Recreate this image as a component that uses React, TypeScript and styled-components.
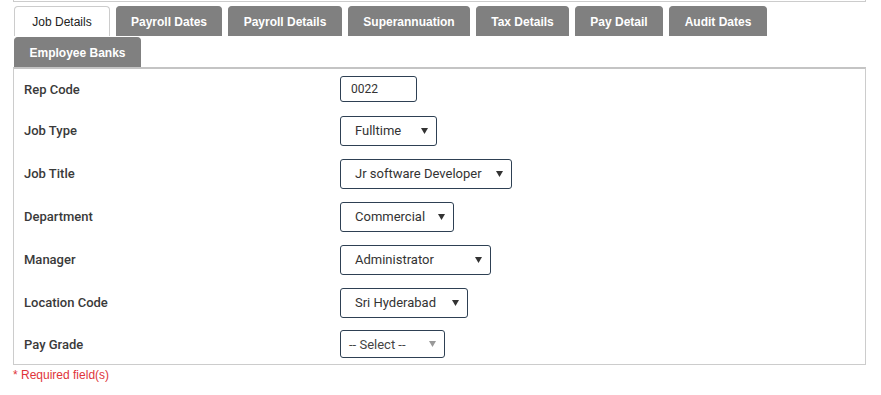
import React from 'react'
import styled, { createGlobalStyle } from 'styled-components'

const GlobalStyle = createGlobalStyle`
  html, body {
    margin: 0;
    padding: 0;
    background: #fff;
  }
  body {
    font-family: Roboto, "Liberation Sans", Arial, sans-serif;
    color: #333;
  }
`

const Page = styled.div`
  padding-left: 13px;
  width: 853px;
`

const TopEdge = styled.div`
  height: 1px;
  border: 1px solid #ccc;
  border-top: none;
`

const TabBar = styled.div`
  display: flex;
  flex-wrap: wrap;
  margin-top: 4px;
  padding-left: 1px;
  row-gap: 1px;
`

const Tab = styled.div<{ $active?: boolean; $w: number }>`
  width: ${p => p.$w}px;
  height: 30px;
  box-sizing: border-box;
  display: flex;
  align-items: center;
  justify-content: center;
  white-space: nowrap;
  margin-right: 6px;
  border-radius: 4px 4px 0 0;
  font-family: "Liberation Sans", Arial, sans-serif;
  font-size: 12px;
  font-weight: ${p => (p.$active ? 'normal' : 'bold')};
  color: ${p => (p.$active ? '#222' : '#fff')};
  background: ${p => (p.$active ? '#fff' : '#808080')};
  border: 1px solid ${p => (p.$active ? '#ccc' : '#808080')};
  border-bottom: none;
`

const Panel = styled.div`
  border: 1px solid #ccc;
  border-top: 2px solid #c4c4c4;
  height: 298px;
  box-sizing: border-box;
  display: flex;
  flex-direction: column;
`

const Row = styled.div<{ $h: number }>`
  display: flex;
  align-items: center;
  height: ${p => p.$h}px;
  flex: none;
`

const Label = styled.div`
  width: 316px;
  padding-left: 10px;
  font-size: 13px;
  font-weight: 500;
  color: #3a3a3a;
`

const TextInput = styled.div`
  width: 77px;
  height: 26px;
  box-sizing: border-box;
  border: 1px solid #2e4053;
  border-radius: 3px;
  display: flex;
  align-items: center;
  padding-left: 10px;
  font-size: 12px;
  color: #333;
`

const SelectBox = styled.div<{ $w: number; $h?: number; $muted?: boolean }>`
  width: ${p => p.$w}px;
  height: ${p => p.$h ?? 30}px;
  box-sizing: border-box;
  border: 1px solid #2e4053;
  border-radius: 3px;
  display: flex;
  align-items: center;
  justify-content: space-between;
  padding: 0 8px 0 ${p => (p.$muted ? 8 : 14)}px;
  font-size: 13px;
  color: ${p => (p.$muted ? '#444' : '#333')};
`

const Arrow = styled.svg`
  width: 7px;
  height: 6px;
  flex: none;
`

const Required = styled.div`
  margin-top: 3px;
  font-family: "Liberation Sans", Arial, sans-serif;
  font-size: 12px;
  color: #e0343a;
`

const tabs = [
  { name: 'Job Details', w: 96, active: true },
  { name: 'Payroll Dates', w: 106 },
  { name: 'Payroll Details', w: 114 },
  { name: 'Superannuation', w: 122 },
  { name: 'Tax Details', w: 93 },
  { name: 'Pay Detail', w: 88 },
  { name: 'Audit Dates', w: 98 },
  { name: 'Employee Banks', w: 127 }
]

const selects = [
  { label: 'Job Type', value: 'Fulltime', w: 97 },
  { label: 'Job Title', value: 'Jr software Developer', w: 172 },
  { label: 'Department', value: 'Commercial', w: 114 },
  { label: 'Manager', value: 'Administrator', w: 151 },
  { label: 'Location Code', value: 'Sri Hyderabad', w: 128 }
]

const Caret = ({ color = '#333' }: { color?: string }) => (
  <Arrow viewBox="0 0 7 6">
    <path d="M0 0 H7 L3.5 6 Z" fill={color} />
  </Arrow>
)

export default function App() {
  return (
    <Page>
      <GlobalStyle />
      <TopEdge />
      <TabBar>
        {tabs.map(t => (
          <Tab key={t.name} $active={t.active} $w={t.w}>
            {t.name}
          </Tab>
        ))}
      </TabBar>
      <Panel>
        <Row $h={40}>
          <Label>Rep Code</Label>
          <TextInput>0022</TextInput>
        </Row>
        {selects.map(s => (
          <Row $h={43} key={s.label}>
            <Label>{s.label}</Label>
            <SelectBox $w={s.w}>
              <span>{s.value}</span>
              <Caret />
            </SelectBox>
          </Row>
        ))}
        <Row $h={40}>
          <Label>Pay Grade</Label>
          <SelectBox $w={105} $h={28} $muted>
            <span>-- Select --</span>
            <Caret color="#999" />
          </SelectBox>
        </Row>
      </Panel>
      <Required>* Required field(s)</Required>
    </Page>
  )
}
